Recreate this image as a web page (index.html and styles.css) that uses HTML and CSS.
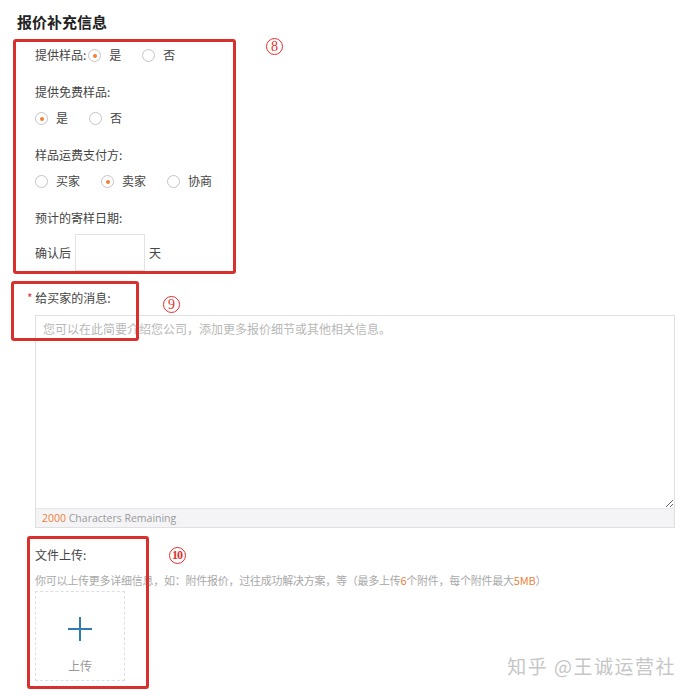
FILE: index.html
```html
<!DOCTYPE html>
<html lang="zh-CN">
<head>
    <meta charset="UTF-8">
    <title>报价补充信息</title>
    <link rel="stylesheet" href="styles.css">
</head>
<body>
    <div class="page">
        <h3 class="title">报价补充信息</h3>

        <div class="sample">
            <div class="row row-inline">
                <span class="label">提供样品:</span>
                <span class="opt"><i class="radio on"></i>是</span>
                <span class="opt"><i class="radio"></i>否</span>
            </div>
            <div class="row label">提供免费样品:</div>
            <div class="row row-tight">
                <span class="opt"><i class="radio on"></i>是</span>
                <span class="opt"><i class="radio"></i>否</span>
            </div>
            <div class="row label">样品运费支付方:</div>
            <div class="row row-tight">
                <span class="opt"><i class="radio"></i>买家</span>
                <span class="opt"><i class="radio on"></i>卖家</span>
                <span class="opt"><i class="radio"></i>协商</span>
            </div>
            <div class="row label">预计的寄样日期:</div>
            <div class="days">
                <span>确认后</span>
                <input type="text" class="days-input">
                <span>天</span>
            </div>
        </div>

        <div class="message">
            <div class="label"><span class="req">*</span> 给买家的消息:</div>
            <div class="msg-box">
                <textarea class="msg-text" placeholder="您可以在此简要介绍您公司，添加更多报价细节或其他相关信息。"></textarea>
                <div class="msg-foot"><span class="hl">2000</span> Characters Remaining</div>
            </div>
        </div>

        <div class="upload">
            <div class="label">文件上传:</div>
            <p class="hint">你可以上传更多详细信息，如：附件报价，过往成功解决方案，等（最多上传<span class="hl">6</span>个附件，每个附件最大<span class="hl">5MB</span>）</p>
            <div class="drop">
                <svg class="plus" width="26" height="26" viewBox="0 0 26 26">
                    <path d="M13 1v24M1 13h24" stroke="#2d7db3" stroke-width="2" fill="none"/>
                </svg>
                <span class="drop-text">上传</span>
            </div>
        </div>

        <!-- annotation marks -->
        <div class="mark mark-1"></div>
        <div class="mark mark-2"></div>
        <div class="mark mark-3"></div>
        <span class="num num-1">8</span>
        <span class="num num-2">9</span>
        <span class="num num-3 narrow">10</span>
        <div class="watermark">知乎 @王诚运营社</div>
    </div>
</body>
</html>
```

FILE: styles.css
```css
body { margin: 0; background: #fff; font-family: "Noto Sans CJK SC", "Noto Sans", sans-serif; font-size: 12px; color: #444; }
.page { position: relative; width: 692px; height: 696px; overflow: hidden; }
.title { margin: 0; padding: 13px 0 0 17px; font-size: 15px; line-height: 18px; font-weight: bold; color: #222; }

.sample { padding: 15px 0 0 35px; display: flex; flex-direction: column; }
.row { line-height: 18px; display: flex; align-items: center; }
.row.label { margin-top: 19px; }
.row-tight { margin-top: 8px; }
.row-inline .label { margin-right: 2px; }
.opt { display: inline-flex; align-items: center; margin-right: 21px; }
.radio { width: 11px; height: 11px; border: 1px solid #c4c4c4; border-radius: 50%; margin-right: 8px; position: relative; box-sizing: content-box; }
.radio.on::after { content: ""; position: absolute; left: 4px; top: 4px; width: 4px; height: 4px; border-radius: 50%; background: #ef7f3a; }

.days { margin-top: 7px; display: flex; align-items: center; }
.days-input { width: 70px; height: 37px; margin: 0 4px 0 4px; border: 1px solid #e2e2e2; box-sizing: border-box; padding: 0; }

.message { padding: 18px 0 0 27px; }
.message .label { line-height: 18px; }
.req { color: #e4393c; }
.msg-box { margin: 8px 0 0 8px; width: 640px; border: 1px solid #e0e0e0; box-sizing: border-box; }
.msg-text { display: block; width: 100%; height: 193px; box-sizing: border-box; border: none; border-bottom: 1px solid #e6e6e6; padding: 4px 7px; resize: vertical; font-family: inherit; font-size: 12px; line-height: 18px; color: #333; outline: none; }
.msg-text::placeholder { color: #b8b8b8; }
.msg-foot { height: 18px; line-height: 18px; background: #f4f4f6; padding-left: 6px; font-family: "Open Sans", "Noto Sans", sans-serif; font-size: 10.5px; color: #999; }
.hl { color: #ef7f3a; }

.upload { padding: 18px 0 0 35px; }
.upload .label { line-height: 18px; }
.hint { margin: 8px 0 0; font-size: 11px; line-height: 16px; color: #a9a9a9; letter-spacing: -0.25px; }
.drop { margin-top: 3px; width: 90px; height: 90px; border: 1px dashed #dcdfe3; box-sizing: border-box; display: flex; flex-direction: column; align-items: center; padding-top: 24px; }
.drop-text { margin-top: 15px; color: #999; font-size: 12px; }

.mark { position: absolute; border: 3px solid #d8302c; border-radius: 3px; box-sizing: border-box; }
.mark-1 { left: 13px; top: 39px; width: 223px; height: 235px; }
.mark-2 { left: 11px; top: 281px; width: 128px; height: 60px; }
.mark-3 { left: 27px; top: 536px; width: 122px; height: 153px; }
.num { position: absolute; width: 17px; height: 17px; border: 1.5px solid #e3302c; border-radius: 50%; box-sizing: border-box; color: #e3302c; font-family: "Liberation Serif", serif; font-size: 14px; line-height: 15px; text-align: center; }
.num.narrow { font-size: 12px; letter-spacing: -1px; text-indent: -1px; font-weight: bold; }
.num-1 { left: 266px; top: 38px; }
.num-2 { left: 163px; top: 296px; }
.num-3 { left: 169px; top: 547px; }
.watermark { position: absolute; right: 16px; top: 654px; font-size: 19px; line-height: 24px; color: #c6c6c6; letter-spacing: 1.5px; }
```
